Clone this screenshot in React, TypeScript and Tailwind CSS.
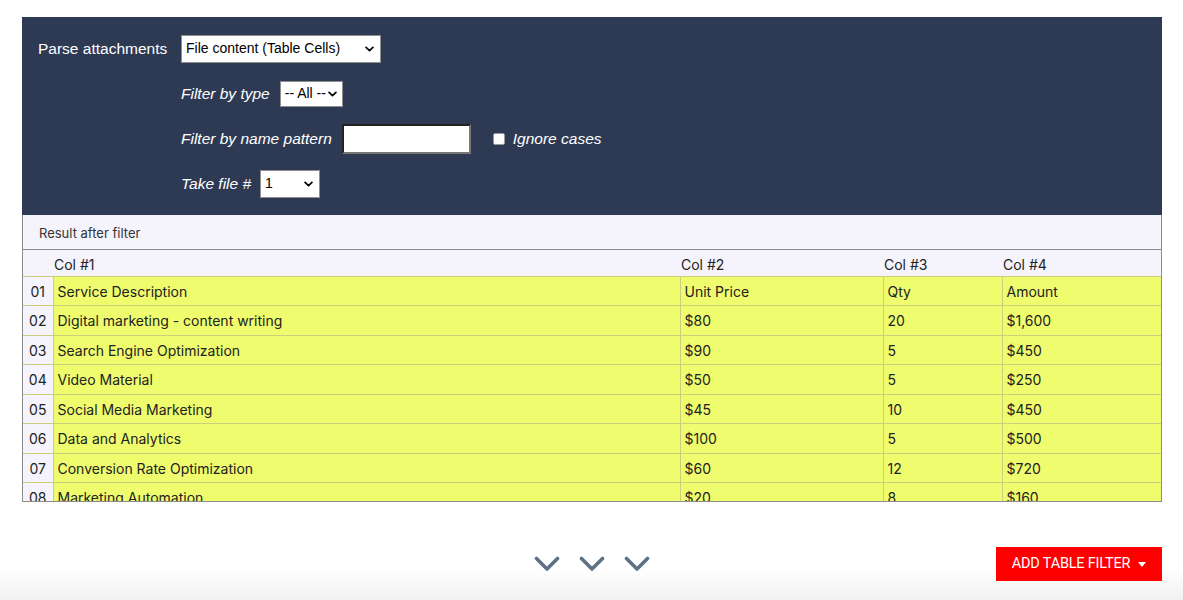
import React from "react";

const rows: [string, string, string, string, string][] = [
  ["01", "Service Description", "Unit Price", "Qty", "Amount"],
  ["02", "Digital marketing - content writing", "$80", "20", "$1,600"],
  ["03", "Search Engine Optimization", "$90", "5", "$450"],
  ["04", "Video Material", "$50", "5", "$250"],
  ["05", "Social Media Marketing", "$45", "10", "$450"],
  ["06", "Data and Analytics", "$100", "5", "$500"],
  ["07", "Conversion Rate Optimization", "$60", "12", "$720"],
  ["08", "Marketing Automation", "$20", "8", "$160"],
  ["09", "Email Campaigns", "$30", "6", "$180"],
];

function Chevron({ className = "" }: { className?: string }) {
  return (
    <svg viewBox="0 0 10 6" className={className} fill="none">
      <path d="M1.2 1.2l3.8 3.6 3.8-3.6" stroke="currentColor" strokeWidth="1.9" strokeLinecap="round" strokeLinejoin="round" />
    </svg>
  );
}

function FakeSelect({ value, width, height }: { value: string; width: string; height: string }) {
  return (
    <div className={`flex flex-none items-center justify-between whitespace-nowrap border border-[#8f8f8f] bg-white pl-[4px] pr-[6px] text-[14px] text-black ${width} ${height}`}>
      <span>{value}</span>
      <Chevron className="ml-[2px] h-[6px] w-[9px] flex-none text-black" />
    </div>
  );
}

export default function App() {
  return (
    <div className="relative h-[600px] w-[1183px] overflow-hidden bg-white font-['Liberation_Sans',Arial,sans-serif]">
      <div className="absolute inset-x-0 bottom-0 h-[32px] bg-gradient-to-b from-white to-[#f1f1f1]" />
      <div className="relative pt-[17px]">
        <div className="mx-[22px] w-[1140px]">
          {/* filter panel */}
          <div className="bg-[#2e3a54] px-[16px] py-[9px] text-[15.5px] text-white">
            <div className="flex h-[45px] items-center">
              <span className="w-[143px] whitespace-nowrap">Parse attachments</span>
              <FakeSelect value="File content (Table Cells)" width="w-[200px]" height="h-[28px]" />
            </div>
            <div className="flex h-[45px] items-center pl-[143px]">
              <span className="mr-[10px] italic">Filter by type</span>
              <FakeSelect value="-- All --" width="w-[63px]" height="h-[26px]" />
            </div>
            <div className="flex h-[45px] items-center pl-[143px]">
              <span className="mr-[10px] italic">Filter by name pattern</span>
              <div className="h-[30px] w-[129px] flex-none border-2 border-t-[#222] border-l-[#222] border-r-[#777] border-b-[#777] bg-white" />
              <div className="ml-[22px] h-[12px] w-[12px] flex-none rounded-[2px] border border-[#999] bg-white" />
              <span className="ml-[8px] italic">Ignore cases</span>
            </div>
            <div className="flex h-[45px] items-center pl-[143px]">
              <span className="mr-[9px] italic">Take file #</span>
              <FakeSelect value="1" width="w-[60px]" height="h-[28px]" />
            </div>
          </div>

          {/* result */}
          <div className="h-[287px] overflow-hidden border-x border-b border-[#8c8c8c] bg-[#f5f3fc] font-['Inter',sans-serif] text-[#222]">
            <div className="flex h-[35px] items-center border-b border-[#8c8c8c] pl-[16px] pt-[3px] text-[13px] text-[#333]">
              Result after filter
            </div>
            <table className="w-full border-collapse text-[14px]">
              <colgroup>
                <col className="w-[30px]" />
                <col className="w-[627px]" />
                <col className="w-[203px]" />
                <col className="w-[119px]" />
                <col />
              </colgroup>
              <thead>
                <tr className="h-[26px]">
                  <th className="font-normal"></th>
                  <th className="pl-[1px] pt-[3px] text-left font-normal">Col #1</th>
                  <th className="pl-[1px] pt-[3px] text-left font-normal">Col #2</th>
                  <th className="pl-[1px] pt-[3px] text-left font-normal">Col #3</th>
                  <th className="pl-[1px] pt-[3px] text-left font-normal">Col #4</th>
                </tr>
              </thead>
              <tbody>
                {rows.map((r) => (
                  <tr key={r[0]} className="h-[29.5px]">
                    <td className="border-t border-[#cdcd7c] bg-[#f5f3fc] pt-[1px] text-center">{r[0]}</td>
                    {r.slice(1).map((c, i) => (
                      <td key={i} className="border-t border-l border-[#cdcd7c] bg-[#effc6d] px-[4px] pt-[1px]">
                        {c}
                      </td>
                    ))}
                  </tr>
                ))}
              </tbody>
            </table>
          </div>

          {/* footer */}
          <div className="relative mt-[45px] flex h-[34px] items-center justify-center">
            <div className="flex items-center gap-[19px] text-[#5f7285]">
              {[0, 1, 2].map((i) => (
                <svg key={i} viewBox="0 0 26 16" className="h-[16px] w-[26px]" fill="none">
                  <path d="M2.5 2.5l10.5 10.5 10.5-10.5" stroke="currentColor" strokeWidth="3.6" strokeLinecap="round" strokeLinejoin="round" />
                </svg>
              ))}
            </div>
            <button className="absolute right-0 top-0 flex h-[34px] w-[166px] items-center justify-center gap-[8px] bg-[#ff0000] font-['Roboto',sans-serif] text-[14.5px] font-normal uppercase tracking-[-0.2px] text-white">
              Add table filter
              <span className="h-0 w-0 border-x-[4px] border-t-[5px] border-x-transparent border-t-white" />
            </button>
          </div>
        </div>
      </div>
    </div>
  );
}
